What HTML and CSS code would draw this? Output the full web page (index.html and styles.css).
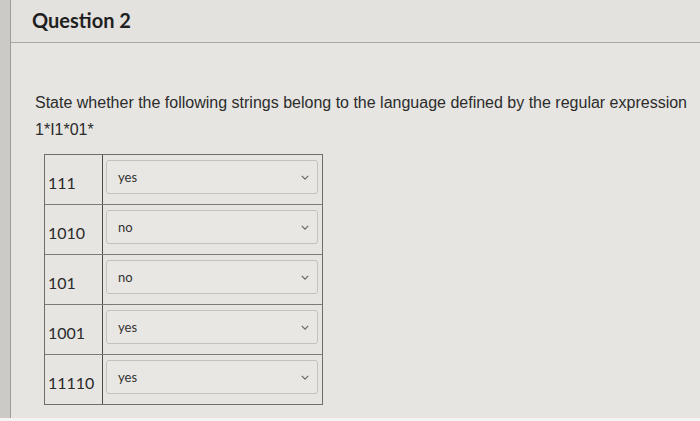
FILE: index.html
```html
<!DOCTYPE html>
<html>
<head>
<meta charset="utf-8">
<link rel="stylesheet" href="styles.css">
</head>
<body>
<div class="page">
  <div class="sidebar"></div>
  <div class="main">
    <div class="header"><h1 class="title">Question 2</h1></div>
    <div class="content">
      <p class="prompt">State whether the following strings belong to the language defined by the regular expression<br>1*I1*01*</p>
      <div class="grid">
        <div class="row"><div class="label">111</div><div class="cell"><div class="select"><span>yes</span><svg class="chev" viewBox="0 0 10 6"><path d="M1 1 L5 5 L9 1"/></svg></div></div></div>
        <div class="row"><div class="label">1010</div><div class="cell"><div class="select"><span>no</span><svg class="chev" viewBox="0 0 10 6"><path d="M1 1 L5 5 L9 1"/></svg></div></div></div>
        <div class="row"><div class="label">101</div><div class="cell"><div class="select"><span>no</span><svg class="chev" viewBox="0 0 10 6"><path d="M1 1 L5 5 L9 1"/></svg></div></div></div>
        <div class="row"><div class="label">1001</div><div class="cell"><div class="select"><span>yes</span><svg class="chev" viewBox="0 0 10 6"><path d="M1 1 L5 5 L9 1"/></svg></div></div></div>
        <div class="row last"><div class="label">11110</div><div class="cell"><div class="select"><span>yes</span><svg class="chev" viewBox="0 0 10 6"><path d="M1 1 L5 5 L9 1"/></svg></div></div></div>
      </div>
    </div>
  </div>
</div>
</body>
</html>
```
FILE: styles.css
```css
html, body {
  margin: 0;
  padding: 0;
  background: #e6e5e1;
}
.page {
  display: flex;
  width: 700px;
  height: 418px;
  border-bottom: 3px solid #f4f4f2;
  overflow: hidden;
}
.sidebar {
  width: 10px;
  flex: none;
  background: #cbcac6;
  border-right: 1px solid #9d9c99;
}
.main {
  flex: 1;
  display: flex;
  flex-direction: column;
}
.header {
  height: 40px;
  padding-bottom: 2px;
  background: #e3e2de;
  border-bottom: 1px solid #a9a8a5;
  padding-left: 21px;
  display: flex;
  align-items: center;
}
.title {
  margin: 0;
  font-family: Lato, "Liberation Sans", sans-serif;
  font-weight: 700;
  font-size: 20px;
  color: #1f1f1f;
}
.content {
  padding: 46px 0 0 24px;
}
.prompt {
  margin: 0;
  font-family: "Liberation Sans", Arial, sans-serif;
  font-size: 16px;
  line-height: 27px;
  color: #2c2c2c;
}
.grid {
  margin: 11px 0 0 9px;
  width: 277px;
  border: 1px solid #6e6e6c;
}
.row {
  display: flex;
  height: 49px;
  border-bottom: 1px solid #7a7a78;
}
.row.last {
  border-bottom: none;
}
.label {
  width: 54px;
  flex: none;
  border-right: 1px solid #4c4c4a;
  padding: 5px 0 0 3px;
  display: flex;
  align-items: center;
  font-family: Lato, "Liberation Sans", sans-serif;
  font-size: 16px;
  color: #2a2a2a;
}
.cell {
  flex: 1;
  display: flex;
  align-items: flex-start;
  padding: 5px 4px 0 3px;
}
.select {
  flex: 1;
  height: 32px;
  border: 1px solid #c3c2be;
  border-radius: 3px;
  background: #e8e7e3;
  display: flex;
  align-items: center;
  justify-content: space-between;
  padding: 0 8px 0 11px;
  font-family: Lato, "Liberation Sans", sans-serif;
  font-size: 13px;
  color: #333;
}
.chev {
  width: 8px;
  height: 5px;
  fill: none;
  stroke: #6a6a6a;
  stroke-width: 1.6;
}
```
